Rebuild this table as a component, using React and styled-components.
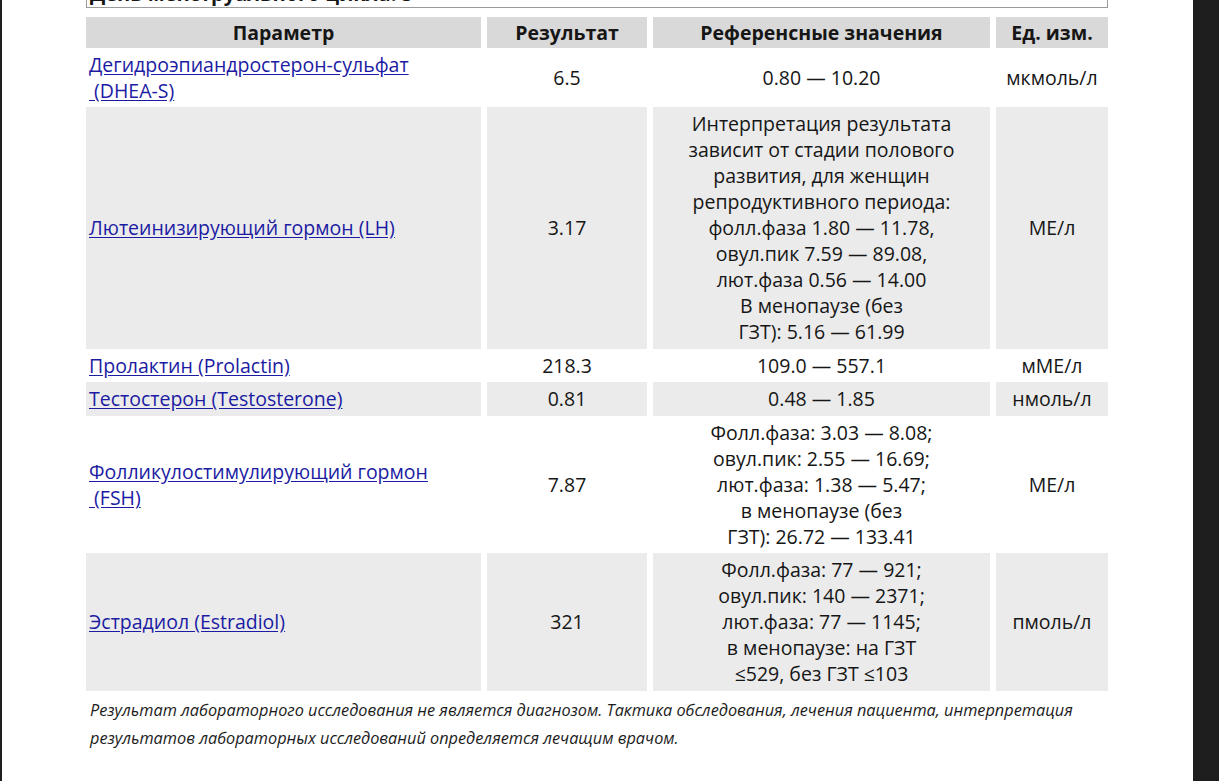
import React from "react";
import styled, { createGlobalStyle } from "styled-components";

const GlobalStyle = createGlobalStyle`
  html, body {
    margin: 0;
    padding: 0;
    background: #ffffff;
  }
  body {
    font-family: "Open Sans", "Noto Sans", Arial, sans-serif;
    color: #161616;
  }
`;

const Screen = styled.div`
  display: flex;
  width: 1219px;
  height: 781px;
  overflow: hidden;
  background: #1e1e1e;
`;

const EdgeLeft = styled.div`
  width: 2px;
  flex: none;
`;

const EdgeRight = styled.div`
  width: 26px;
  flex: none;
`;

const Sheet = styled.div`
  flex: 1;
  background: #ffffff;
  padding: 0 0 0 84px;
  overflow: hidden;
`;

const Content = styled.div`
  width: 1022px;
  margin-top: -21px;
`;

const CycleBox = styled.div`
  border: 1px solid #9a9a9a;
  padding: 0 3px;
  height: 27px;
  font-size: 20px;
  font-weight: 700;
  line-height: 27px;
`;

const Table = styled.table`
  width: calc(100% + 12px);
  margin: 7px -6px 0;
  border-collapse: separate;
  border-spacing: 6px 2px;
  table-layout: fixed;
  font-size: 19.5px;
  line-height: 26px;
`;

const HeadCell = styled.th`
  background: #d9d9d9;
  font-weight: 700;
  text-align: center;
  padding: 3px 4px 2px;
`;

const Cell = styled.td`
  background: ${(p) => (p.$shaded ? "#ebebeb" : "#ffffff")};
  text-align: ${(p) => (p.$left ? "left" : "center")};
  vertical-align: middle;
  padding: ${(p) => (p.$shaded ? "4px 3px" : "2px 3px 1px")};
`;

const ParamLink = styled.a`
  color: #1b1ba3;
  text-decoration: underline;
  text-underline-offset: 2px;
`;

const Note = styled.p`
  margin: 3px 0 0 4px;
  font-size: 16.3px;
  font-style: italic;
  line-height: 28px;
  color: #1c1c1c;
`;

const rows = [
  {
    name: ["Дегидроэпиандростерон-сульфат", "\u00a0(DHEA-S)"],
    value: "6.5",
    ref: ["0.80 — 10.20"],
    unit: "мкмоль/л",
  },
  {
    name: ["Лютеинизирующий гормон (LH)"],
    value: "3.17",
    ref: [
      "Интерпретация результата",
      "зависит от стадии полового",
      "развития, для женщин",
      "репродуктивного периода:",
      "фолл.фаза 1.80 — 11.78,",
      "овул.пик 7.59 — 89.08,",
      "лют.фаза 0.56 — 14.00",
      "В менопаузе (без",
      "ГЗТ): 5.16 — 61.99",
    ],
    unit: "МЕ/л",
  },
  {
    name: ["Пролактин (Prolactin)"],
    value: "218.3",
    ref: ["109.0 — 557.1"],
    unit: "мМЕ/л",
  },
  {
    name: ["Тестостерон (Testosterone)"],
    value: "0.81",
    ref: ["0.48 — 1.85"],
    unit: "нмоль/л",
  },
  {
    name: ["Фолликулостимулирующий гормон", "\u00a0(FSH)"],
    value: "7.87",
    ref: [
      "Фолл.фаза: 3.03 — 8.08;",
      "овул.пик: 2.55 — 16.69;",
      "лют.фаза: 1.38 — 5.47;",
      "в менопаузе (без",
      "ГЗТ): 26.72 — 133.41",
    ],
    unit: "МЕ/л",
  },
  {
    name: ["Эстрадиол (Estradiol)"],
    value: "321",
    ref: [
      "Фолл.фаза: 77 — 921;",
      "овул.пик: 140 — 2371;",
      "лют.фаза: 77 — 1145;",
      "в менопаузе: на ГЗТ",
      "≤529, без ГЗТ ≤103",
    ],
    unit: "пмоль/л",
  },
];

const Lines = ({ items }) =>
  items.map((line, i) => (
    <React.Fragment key={i}>
      {i > 0 && <br />}
      {line}
    </React.Fragment>
  ));

const App = () => {
  return (
    <>
      <GlobalStyle />
      <Screen>
        <EdgeLeft />
        <Sheet>
          <Content>
            <CycleBox>День менструального цикла: 5</CycleBox>
            <Table>
              <colgroup>
                <col style={{ width: 395 }} />
                <col style={{ width: 160 }} />
                <col style={{ width: 337 }} />
                <col style={{ width: 112 }} />
              </colgroup>
              <thead>
                <tr>
                  <HeadCell>Параметр</HeadCell>
                  <HeadCell>Результат</HeadCell>
                  <HeadCell>Референсные значения</HeadCell>
                  <HeadCell>Ед. изм.</HeadCell>
                </tr>
              </thead>
              <tbody>
                {rows.map((row, i) => {
                  const shaded = i % 2 === 1;
                  return (
                    <tr key={row.value}>
                      <Cell $left $shaded={shaded}>
                        <ParamLink href="#">
                          <Lines items={row.name} />
                        </ParamLink>
                      </Cell>
                      <Cell $shaded={shaded}>{row.value}</Cell>
                      <Cell $shaded={shaded}>
                        <Lines items={row.ref} />
                      </Cell>
                      <Cell $shaded={shaded}>{row.unit}</Cell>
                    </tr>
                  );
                })}
              </tbody>
            </Table>
            <Note>
              Результат лабораторного исследования не является диагнозом. Тактика обследования, лечения пациента, интерпретация
              <br />
              результатов лабораторных исследований определяется лечащим врачом.
            </Note>
          </Content>
        </Sheet>
        <EdgeRight />
      </Screen>
    </>
  );
};

export default App;
